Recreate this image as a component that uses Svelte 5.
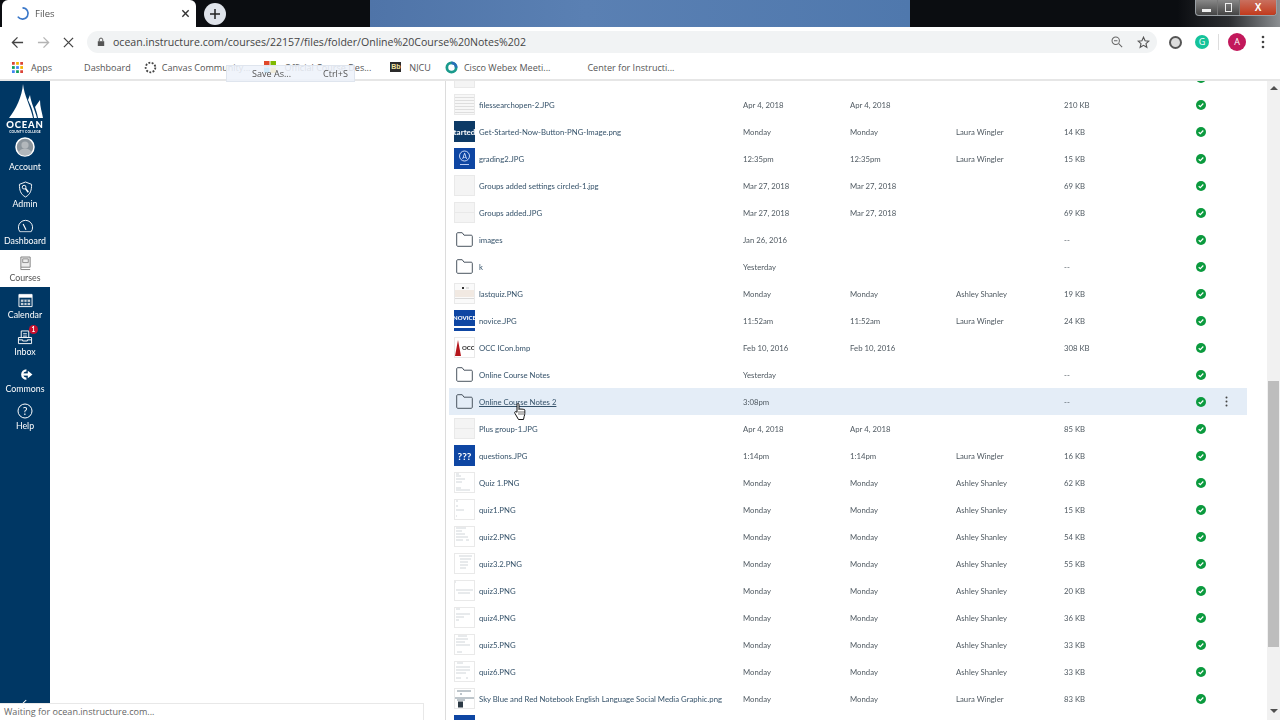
<script>
	const files = [
		{ kind: "plain", name: "", date: "", mod: "", by: "", size: "" },
		{ kind: "grid", name: "filessearchopen-2.JPG", date: "Apr 4, 2018", mod: "Apr 4, 2018", by: "", size: "210 KB" },
		{ kind: "started", name: "Get-Started-Now-Button-PNG-Image.png", date: "Monday", mod: "Monday", by: "Laura Wingler", size: "14 KB" },
		{ kind: "grading", name: "grading2.JPG", date: "12:35pm", mod: "12:35pm", by: "Laura Wingler", size: "15 KB" },
		{ kind: "plain", name: "Groups added settings circled-1.jpg", date: "Mar 27, 2018", mod: "Mar 27, 2018", by: "", size: "69 KB" },
		{ kind: "plain", name: "Groups added.JPG", date: "Mar 27, 2018", mod: "Mar 27, 2018", by: "", size: "69 KB" },
		{ kind: "folder", name: "images", date: "Jan 26, 2016", mod: "", by: "", size: "--" },
		{ kind: "folder", name: "k", date: "Yesterday", mod: "", by: "", size: "--" },
		{ kind: "lastquiz", name: "lastquiz.PNG", date: "Monday", mod: "Monday", by: "Ashley Shanley", size: "19 KB" },
		{ kind: "novice", name: "novice.JPG", date: "11:52am", mod: "11:52am", by: "Laura Wingler", size: "24 KB" },
		{ kind: "occ", name: "OCC ICon.bmp", date: "Feb 10, 2016", mod: "Feb 10, 2016", by: "", size: "308 KB" },
		{ kind: "folder", name: "Online Course Notes", date: "Yesterday", mod: "", by: "", size: "--" },
		{ kind: "folder", name: "Online Course Notes 2", date: "3:08pm", mod: "", by: "", size: "--", hover: true },
		{ kind: "plain", name: "Plus group-1.JPG", date: "Apr 4, 2018", mod: "Apr 4, 2018", by: "", size: "85 KB" },
		{ kind: "questions", name: "questions.JPG", date: "1:14pm", mod: "1:14pm", by: "Laura Wingler", size: "16 KB" },
		{ kind: "lines", lines: "M2 2h3M2 4h5M2 7h9M2 10h6M2 16h5M2 18h14", name: "Quiz 1.PNG", date: "Monday", mod: "Monday", by: "Ashley Shanley", size: "62 KB" },
		{ kind: "lines", lines: "M2 2h2M2 7h2M2 11h8M2 17h1", name: "quiz1.PNG", date: "Monday", mod: "Monday", by: "Ashley Shanley", size: "15 KB" },
		{ kind: "lines", lines: "M2 2h10M2 5h6M2 8h9M2 11h12M2 14h7M12 14h3", name: "quiz2.PNG", date: "Monday", mod: "Monday", by: "Ashley Shanley", size: "54 KB" },
		{ kind: "lines", lines: "M5 3h13M6 6h11M6 9h8M6 12h8M6 15h6", name: "quiz3.2.PNG", date: "Monday", mod: "Monday", by: "Ashley Shanley", size: "55 KB" },
		{ kind: "lines", lines: "M1 2h1M2 10h17M4 13h12", name: "quiz3.PNG", date: "Monday", mod: "Monday", by: "Ashley Shanley", size: "20 KB" },
		{ kind: "lines", lines: "M2 2h4M2 7h14M2 10h8M2 13h3", name: "quiz4.PNG", date: "Monday", mod: "Monday", by: "Ashley Shanley", size: "36 KB" },
		{ kind: "lines", lines: "M4 2h9M2 5h12M2 8h9M2 11h14M3 18h5", name: "quiz5.PNG", date: "Monday", mod: "Monday", by: "Ashley Shanley", size: "33 KB" },
		{ kind: "lines", lines: "M3 2h6M2 6h14M2 9h14M2 12h10M2 17h5M12 17h2", name: "quiz6.PNG", date: "Monday", mod: "Monday", by: "Ashley Shanley", size: "33 KB" },
		{ kind: "sky", name: "Sky Blue and Red Notebook English Language Social Media Graphic.png", date: "Monday", mod: "Monday", by: "Laura Wingler", size: "83 KB" },
		{ kind: "bluebox", name: "", date: "", mod: "", by: "", size: "" }
	];
</script>

<div class="browser">
	<header class="tabstrip">
		<div class="tab">
			<svg class="spinner" viewBox="0 0 16 16" width="15" height="15"><path d="M8 2a6 6 0 1 1-5 9.300" fill="none" stroke="#3b78c9" stroke-width="1.800"/></svg>
			<span class="tab_title">Files</span>
			<svg class="tab_close" viewBox="0 0 10 10" width="9" height="9"><path d="M1.500 1.500l7 7M8.500 1.500l-7 7" stroke="#333" stroke-width="1.500"/></svg>
		</div>
		<div class="newtab">
			<svg viewBox="0 0 12 12" width="12" height="12"><path d="M6 1v10M1 6h10" stroke="#222" stroke-width="1.500"/></svg>
		</div>
		<div class="wallpaper"></div>
		<div class="winbtns">
			<span class="winbtn"><i class="min"></i></span>
			<span class="winbtn"><i class="restore"></i></span>
			<span class="winbtn close">X</span>
		</div>
	</header>

	<div class="toolbar">
		<svg class="nav_btn" viewBox="0 0 14 14" width="13" height="13"><path d="M13 7H2M7 1.500L1.500 7 7 12.500" fill="none" stroke="#444" stroke-width="1.400"/></svg>
		<svg class="nav_btn fwd" viewBox="0 0 14 14" width="13" height="13"><path d="M1 7h11M7 1.500L12.500 7 7 12.500" fill="none" stroke="#b4b4b4" stroke-width="1.400"/></svg>
		<svg class="nav_btn stop" viewBox="0 0 12 12" width="11" height="11"><path d="M1 1l10 10M11 1L1 11" stroke="#444" stroke-width="1.400"/></svg>
		<div class="omnibox">
			<svg class="lock" viewBox="0 0 10 12" width="8" height="10"><path d="M1 5h8v6H1z" fill="#555"/><path d="M2.800 5V3.300a2.200 2.200 0 0 1 4.400 0V5" fill="none" stroke="#555" stroke-width="1.200"/></svg>
			<span class="url">ocean.instructure.com/courses/22157/files/folder/Online%20Course%20Notes%202</span>
			<svg class="zoom_out" viewBox="0 0 14 14" width="12" height="12"><circle cx="5.500" cy="5.500" r="4.300" fill="none" stroke="#666" stroke-width="1.200"/><path d="M9 9l4 4M3.500 5.500h4" stroke="#666" stroke-width="1.200"/></svg>
			<svg class="star" viewBox="0 0 14 14" width="13" height="13"><path d="M7 1.300l1.700 3.800 4 .4-3 2.700.9 4L7 10.100l-3.600 2.100.9-4-3-2.700 4-.4z" fill="none" stroke="#555" stroke-width="1.200"/></svg>
		</div>
		<span class="ext_grey"></span>
		<span class="ext_green">G</span>
		<span class="tb_divider"></span>
		<span class="avatar">A</span>
		<svg class="kebab_main" viewBox="0 0 4 14" width="4" height="14"><circle cx="2" cy="2" r="1.300" fill="#444"/><circle cx="2" cy="7" r="1.300" fill="#444"/><circle cx="2" cy="12" r="1.300" fill="#444"/></svg>
	</div>

	<div class="bookmarks">
		<span class="bm bm_apps">
			<svg viewBox="0 0 12 12" width="11" height="11">
				<rect width="3" height="3" fill="#db4437"/><rect x="4.500" width="3" height="3" fill="#f4b400"/><rect x="9" width="3" height="3" fill="#db4437"/>
				<rect y="4.500" width="3" height="3" fill="#0f9d58"/><rect x="4.500" y="4.500" width="3" height="3" fill="#4285f4"/><rect x="9" y="4.500" width="3" height="3" fill="#f4b400"/>
				<rect y="9" width="3" height="3" fill="#4285f4"/><rect x="4.500" y="9" width="3" height="3" fill="#0f9d58"/><rect x="9" y="9" width="3" height="3" fill="#db4437"/>
			</svg>
			Apps
		</span>
		<span class="bm bm_dash">Dashboard</span>
		<span class="bm bm_canvas">
			<svg viewBox="0 0 14 14" width="13" height="13"><circle cx="7" cy="7" r="5.200" fill="none" stroke="#444" stroke-width="2" stroke-dasharray="2 1.600"/></svg>
			Canvas Community...
		</span>
		<span class="bm bm_official">
			<svg viewBox="0 0 12 12" width="12" height="12"><rect width="5.500" height="5.500" fill="#e0492a"/><rect x="6.500" width="5.500" height="5.500" fill="#7fba00"/><rect y="6.500" width="5.500" height="5.500" fill="#00a4ef"/><rect x="6.500" y="6.500" width="5.500" height="5.500" fill="#ffb900"/></svg>
			Official Course Des...
		</span>
		<span class="bm bm_njcu"><span class="bb">Bb</span>NJCU</span>
		<span class="bm bm_webex">
			<svg viewBox="0 0 14 14" width="13" height="13"><circle cx="7" cy="7" r="5" fill="none" stroke="#1a9a8c" stroke-width="3"/><path d="M7 2a5 5 0 0 1 5 5" fill="none" stroke="#2a6fb8" stroke-width="3"/></svg>
			Cisco Webex Meeti...
		</span>
		<span class="bm bm_center">Center for Instructi...</span>
	</div>

	<main class="page">
		<nav class="sidenav">
			<div class="logo">
				<svg viewBox="0 0 50 40" width="50" height="40">
					<path d="M23 3C24 14 30 24 33 37H9C16 28 22 16 23 3z" fill="#fff"/>
					<path d="M30 14c1 8 5 15 7 23h-3c-1-8-4-14-6-18z" fill="#fff"/>
					<path d="M40 19c0 7 2 12 3 18h-5c-1-5-2-8-3-11z" fill="#fff"/>
				</svg>
				<span class="logo_name">OCEAN</span>
				<span class="logo_sub">COUNTY COLLEGE</span>
			</div>
			<div class="nav_item">
				<span class="nav_icon account">
					<svg viewBox="0 0 20 20" width="20" height="20"><circle cx="10" cy="10" r="9" fill="#8c959c" stroke="#fff" stroke-width="1.500"/><circle cx="10" cy="8" r="3.600" fill="#b3b8bc"/><path d="M3.500 16c1-3.500 4-4.500 6.500-4.500s5.500 1 6.500 4.500a9 9 0 0 1-13 0z" fill="#b3b8bc"/></svg>
				</span>
				<span class="nav_label">Account</span>
			</div>
			<div class="nav_item">
				<span class="nav_icon">
					<svg viewBox="0 0 16 18" width="15" height="17"><path d="M8 1l6.500 2.500c0 6-1 10.500-6.500 13.500C2.500 14 1.500 9.500 1.500 3.500z" fill="none" stroke="#fff" stroke-width="1"/><circle cx="6.500" cy="6.500" r="2" fill="none" stroke="#fff"/><path d="M8 8l3 4" stroke="#fff" stroke-width="1.600"/></svg>
				</span>
				<span class="nav_label">Admin</span>
			</div>
			<div class="nav_item">
				<span class="nav_icon">
					<svg viewBox="0 0 18 14" width="17" height="14"><path d="M3 13A7.500 7.500 0 1 1 15 13" fill="none" stroke="#fff" stroke-width="1"/><path d="M3 13h12" stroke="#fff" stroke-width=".8"/><path d="M6.500 5l3 6" stroke="#fff" stroke-width="1.200"/></svg>
				</span>
				<span class="nav_label">Dashboard</span>
			</div>
			<div class="nav_item active">
				<span class="nav_icon">
					<svg viewBox="0 0 14 16" width="13" height="15"><path d="M2 1h10v11H2z" fill="#ececec" stroke="#7e7e7e"/><path d="M4 3h6v4H4z" fill="none" stroke="#8a8a8a"/><path d="M2 12v2.500h10" fill="none" stroke="#7e7e7e"/></svg>
				</span>
				<span class="nav_label">Courses</span>
			</div>
			<div class="nav_item">
				<span class="nav_icon">
					<svg viewBox="0 0 16 16" width="15" height="15"><path d="M1 1.500h14v13H1z" fill="none" stroke="#fff"/><path d="M1 2h14v3H1z" fill="#fff"/><path d="M3 7h10v6H3z" fill="#c5ced6"/><path d="M6.300 7v6M9.700 7v6M3 10h10" stroke="#003764"/></svg>
				</span>
				<span class="nav_label">Calendar</span>
			</div>
			<div class="nav_item">
				<span class="nav_icon">
					<svg viewBox="0 0 16 16" width="16" height="15"><path d="M4 1h8v9H4z" fill="none" stroke="#fff"/><path d="M6 4h4M6 6.500h4" stroke="#fff"/><path d="M1 8h14v6.500H1z" fill="#003764" stroke="#fff"/><path d="M1 10.500h4.500v1.200h5v-1.200H15" fill="none" stroke="#fff"/></svg>
					<span class="badge">1</span>
				</span>
				<span class="nav_label">Inbox</span>
			</div>
			<div class="nav_item">
				<span class="nav_icon">
					<svg viewBox="0 0 16 14" width="15" height="13"><path d="M9 2.500a4.500 4.500 0 1 0 0 9" fill="none" stroke="#fff" stroke-width="2.400"/><path d="M5 7h7" stroke="#fff" stroke-width="2.400"/><path d="M10.500 3l5 4-5 4z" fill="#fff"/></svg>
				</span>
				<span class="nav_label">Commons</span>
			</div>
			<div class="nav_item">
				<span class="nav_icon">
					<svg viewBox="0 0 16 16" width="16" height="16"><circle cx="8" cy="8" r="7" fill="none" stroke="#fff"/><text x="8" y="11.800" text-anchor="middle" font-size="10.500" font-family="Lato, sans-serif" fill="#fff">?</text></svg>
				</span>
				<span class="nav_label">Help</span>
			</div>
			<svg class="collapse" viewBox="0 0 8 10" width="7" height="9"><path d="M6 1L2 5l4 4" fill="none" stroke="#fff" stroke-width="1.200"/></svg>
		</nav>

		<aside class="folder_pane"></aside>

		<section class="listing">
			{#each files as file}
				<div class="row" class:hover={file.hover}>
					{#if file.kind === "folder"}
						<svg class="folder_icon" viewBox="0 0 17 15" width="17" height="15"><path d="M.700 13.300V1.700c0-.5.400-1 1-1h4.500l1.800 2.500h7.300c.5 0 1 .4 1 1v9.100c0 .5-.5 1-1 1H1.700c-.6 0-1-.5-1-1z" fill="none" stroke="#4a5560" stroke-width="1"/></svg>
					{:else if file.kind === "started"}
						<span class="thumb navy">tarted</span>
					{:else if file.kind === "grading"}
						<span class="thumb blue">
							<svg viewBox="0 0 21 21" width="21" height="21"><circle cx="10.500" cy="8" r="5" fill="none" stroke="#dfe8ff" stroke-width=".9"/><text x="10.500" y="10.500" text-anchor="middle" font-size="7" font-family="Lato, sans-serif" fill="#dfe8ff">A</text><path d="M6 16.500h9" stroke="#cfdcff" stroke-width=".9"/></svg>
						</span>
					{:else if file.kind === "novice"}
						<span class="thumb novice">NOVICE</span>
					{:else if file.kind === "occ"}
						<span class="thumb occ">
							<svg viewBox="0 0 6 16" width="6" height="16"><path d="M3 0l3 16H0z" fill="#b5161c"/></svg>
							<b>OCC</b>
						</span>
					{:else if file.kind === "questions"}
						<span class="thumb blue qq">???</span>
					{:else if file.kind === "bluebox"}
						<span class="thumb blue"></span>
					{:else if file.kind === "lastquiz"}
						<span class="thumb pale">
							<svg viewBox="0 0 21 21" width="21" height="21"><rect x="8" y="4" width="2" height="2" fill="#333"/><path d="M12 5h3" stroke="#aaa" stroke-width=".6"/><path d="M0 10.500h21" stroke="#f1e9e2" stroke-width="7"/><path d="M0 15.500h21" stroke="#ccc" stroke-width=".7"/></svg>
						</span>
					{:else if file.kind === "grid"}
						<span class="thumb grid"></span>
					{:else if file.kind === "lines"}
						<span class="thumb">
							<svg viewBox="0 0 21 21" width="21" height="21"><path d={file.lines} stroke="#c4cacf" stroke-width=".8"/></svg>
						</span>
					{:else if file.kind === "sky"}
						<span class="thumb">
							<svg viewBox="0 0 21 21" width="21" height="21"><path d="M3 3h14M6 6h2M1 10h19M3 12h8" stroke="#7d8c97" stroke-width="1"/><rect x="4" y="13.500" width="5" height="6" fill="#2c3a46"/></svg>
						</span>
					{:else}
						<span class="thumb plain"></span>
					{/if}
					<span class="name">{file.name}</span>
					<span>{file.date}</span>
					<span>{file.mod}</span>
					<span>{file.by}</span>
					<span>{file.size}</span>
					{#if file.kind !== "bluebox"}
						<svg class="status" viewBox="0 0 10 10" width="10" height="10"><circle cx="5" cy="5" r="5" fill="#0b9a3e"/><path d="M2.700 5.200l1.600 1.500 3-3.200" fill="none" stroke="#fff" stroke-width="1.200"/></svg>
					{/if}
					{#if file.hover}
						<svg class="kebab" viewBox="0 0 3 11" width="3" height="11"><circle cx="1.500" cy="1.500" r="1" fill="#444"/><circle cx="1.500" cy="5.500" r="1" fill="#444"/><circle cx="1.500" cy="9.500" r="1" fill="#444"/></svg>
					{/if}
				</div>
			{/each}
		</section>

		<div class="scrollbar">
			<span class="arrow up"></span>
			<span class="thumb_bar"></span>
			<span class="arrow down"></span>
		</div>

		<div class="status_bar">Waiting for ocean.instructure.com...</div>
	</main>

	<div class="saveas"><span>Save As...</span><span>Ctrl+S</span></div>

	<svg class="cursor" viewBox="0 0 14 18" width="14" height="18">
		<path d="M4 1.500c0-1.200 2-1.200 2 0v5c.2-1 1.800-1 2 0 .2-.9 1.800-.9 2 .2.3-.8 1.800-.6 1.800.6 0 2.500.2 4-.6 6l-.7 3.200H5.500L2 10.500C1 9 2.500 7.800 4 9.300z" fill="#fff" stroke="#111" stroke-width="1"/>
		<path d="M6 8v4M8 8v4M10 8v4" stroke="#111" stroke-width=".6"/>
	</svg>
</div>

<style>
	:global(body) {
		margin: 0;
		background: #fff;
		overflow: hidden;
	}

	.browser {
		position: relative;
		width: 1280px;
		height: 720px;
		overflow: hidden;
		display: flex;
		flex-direction: column;
		font-family: "Open Sans", "Liberation Sans", sans-serif;
		color: #444;
		filter: blur(0.4px);
	}

	.tabstrip {
		height: 27px;
		flex: none;
		display: flex;
		align-items: center;
		background: linear-gradient(90deg, #0b0d11 92%, #2b2d30 96%, #8c8f92);
		position: relative;
	}

	.tab {
		width: 194px;
		height: 27px;
		margin-left: 2px;
		flex: none;
		box-sizing: border-box;
		background: #fff;
		border-radius: 6px 6px 0 0;
		display: flex;
		align-items: center;
		padding-left: 13px;
		z-index: 1;
	}

	.tab_title {
		margin-left: 5px;
		font-size: 9.500px;
		color: #555;
	}

	.tab_close {
		margin-left: auto;
		margin-right: 6px;
	}

	.newtab {
		width: 22px;
		height: 22px;
		margin-left: 8px;
		flex: none;
		border-radius: 50%;
		background: #dfe3ea;
		display: flex;
		align-items: center;
		justify-content: center;
		z-index: 1;
	}

	.wallpaper {
		position: absolute;
		left: 370px;
		width: 540px;
		top: 0;
		bottom: 0;
		background: linear-gradient(90deg, #4f74a8, #5a80b3 40%, #4f78ad);
	}

	.winbtns {
		position: absolute;
		right: 3px;
		top: 0;
		height: 15px;
		display: flex;
		border: 1px solid #9aa0a5;
		border-top: none;
		border-radius: 0 0 4px 4px;
		overflow: hidden;
		background: linear-gradient(#888, #444);
	}

	.winbtn {
		width: 21px;
		display: flex;
		align-items: center;
		justify-content: center;
		border-right: 1px solid #777;
	}

	.winbtn.close {
		width: 36px;
		border: none;
		background: linear-gradient(#c9705f, #c23a1c);
		color: #fff;
		font: bold 10px "Liberation Sans", sans-serif;
	}

	.min {
		width: 9px;
		height: 3px;
		margin-top: 5px;
		background: #eee;
	}

	.restore {
		width: 5px;
		height: 7px;
		border: 1.500px solid #eee;
	}

	.toolbar {
		height: 28px;
		flex: none;
		box-sizing: border-box;
		padding-top: 2px;
		display: flex;
		align-items: center;
		background: #fff;
	}

	.nav_btn {
		margin-left: 11px;
		flex: none;
	}

	.nav_btn.fwd {
		margin-left: 13px;
	}

	.nav_btn.stop {
		margin-left: 13px;
	}

	.omnibox {
		width: 1070px;
		height: 22px;
		margin-left: 13px;
		flex: none;
		box-sizing: border-box;
		padding-left: 10px;
		border-radius: 11px;
		background: #f1f3f4;
		display: flex;
		align-items: center;
	}

	.url {
		margin-left: 8px;
		font-size: 10.580px;
		color: #444;
		white-space: nowrap;
	}

	.zoom_out {
		margin-left: auto;
	}

	.star {
		margin-left: 14px;
		margin-right: 7px;
	}

	.ext_grey {
		width: 9px;
		height: 9px;
		margin-left: 12px;
		flex: none;
		border-radius: 50%;
		border: 2px solid #555;
		background: #ddd;
	}

	.ext_green {
		width: 14px;
		height: 14px;
		margin-left: 13px;
		flex: none;
		border-radius: 50%;
		background: #15c39a;
		color: #fff;
		font-size: 9px;
		line-height: 14px;
		text-align: center;
	}

	.tb_divider {
		width: 1px;
		height: 16px;
		margin-left: 9px;
		background: #ddd;
	}

	.avatar {
		width: 18px;
		height: 18px;
		margin-left: 9px;
		flex: none;
		border-radius: 50%;
		background: #c2185b;
		color: #fff;
		font-size: 9px;
		line-height: 18px;
		text-align: center;
	}

	.kebab_main {
		margin-left: 15px;
	}

	.bookmarks {
		height: 24px;
		flex: none;
		display: flex;
		align-items: center;
		border-bottom: 2px solid #e6e6e6;
		background: #fff;
		font-size: 9.050px;
		color: #555;
	}

	.bm {
		display: flex;
		align-items: center;
		gap: 6px;
		white-space: nowrap;
	}

	.bm_apps {
		margin-left: 12px;
		gap: 8px;
	}

	.bm_dash {
		margin-left: 32px;
	}

	.bm_canvas {
		margin-left: 13px;
		gap: 5px;
	}

	.bm_official {
		margin-left: 14px;
		gap: 8px;
	}

	.bm_njcu {
		margin-left: 19px;
	}

	.bm_webex {
		margin-left: 14px;
	}

	.bm_center {
		margin-left: 37px;
	}

	.bb {
		width: 11px;
		height: 10px;
		margin-right: 2px;
		background: #2b2b2b;
		color: #f2e3a0;
		font: bold 7px "Liberation Sans", sans-serif;
		line-height: 10px;
		text-align: center;
	}

	.page {
		position: relative;
		flex: 1;
		min-height: 0;
		display: flex;
		overflow: hidden;
	}

	.sidenav {
		width: 50px;
		flex: none;
		display: flex;
		flex-direction: column;
		background: #003764;
		color: #fff;
		font: 8.800px Lato, sans-serif;
	}

	.logo {
		height: 58px;
		flex: none;
		display: flex;
		flex-direction: column;
		align-items: center;
	}

	.logo_name {
		margin-top: -1px;
		font: 900 9.500px/9px Lato, sans-serif;
		letter-spacing: 0.800px;
	}

	.logo_sub {
		margin-top: 1px;
		font: 700 3.300px/4px Lato, sans-serif;
		letter-spacing: 0.200px;
		white-space: nowrap;
	}

	.nav_item {
		height: 37px;
		flex: none;
		box-sizing: border-box;
		padding-top: 4px;
		display: flex;
		flex-direction: column;
		align-items: center;
		line-height: 10px;
	}

	.nav_label {
		margin-top: 1px;
	}

	.nav_item.active {
		background: #fff;
		color: #555;
	}

	.nav_icon {
		position: relative;
		height: 18px;
		display: flex;
		align-items: center;
		justify-content: center;
	}

	.nav_icon.account {
		margin-top: -5px;
		margin-bottom: 5px;
	}

	.badge {
		position: absolute;
		top: -3px;
		right: -5px;
		width: 9px;
		height: 9px;
		border-radius: 50%;
		background: #c8102e;
		color: #fff;
		font: 700 6.500px/9px Lato, sans-serif;
		text-align: center;
	}

	.collapse {
		margin-top: auto;
		margin-bottom: 12px;
		margin-left: 21px;
	}

	.folder_pane {
		width: 395px;
		flex: none;
		border-right: 1px solid #dcdcdc;
	}

	.listing {
		flex: 1;
		min-width: 0;
		margin-top: -17px;
		padding: 0 20px 0 3px;
		font: 7.750px Lato, sans-serif;
		color: #505a62;
	}

	.row {
		height: 27px;
		display: grid;
		grid-template-columns: 25px 264px 107px 106px 108px 132px 10px 1fr;
		align-items: center;
		padding-left: 5px;
		white-space: nowrap;
	}

	.row.hover {
		background: #e4edf7;
	}

	.name {
		color: #35526a;
	}

	.row.hover .name {
		text-decoration: underline;
	}

	.thumb {
		width: 21px;
		height: 21px;
		box-sizing: border-box;
		display: flex;
		align-items: center;
		overflow: hidden;
		border: 1px solid #e9e9e9;
		background: #fff;
	}

	.thumb svg {
		flex: none;
		margin: -1px;
	}

	.plain {
		background: linear-gradient(#f4f4f4 45%, #e9e9e9 45%, #e9e9e9 50%, #f4f4f4 50%);
	}

	.grid {
		background: repeating-linear-gradient(#f7f7f7 0 2px, #dedede 2px 3px);
	}

	.pale {
		background: #fafafa;
	}

	.navy {
		border: none;
		justify-content: center;
		background: #0d3a66;
		color: #fff;
		font: 700 8px Lato, sans-serif;
	}

	.blue {
		border: none;
		background: #0e46a3;
	}

	.blue svg {
		margin: 0;
	}

	.novice {
		flex-direction: column;
		justify-content: flex-start;
		padding-top: 4px;
		border: none;
		background: linear-gradient(#0e46a3 78%, #fff 78%, #fff 84%, #0e46a3 84%);
		color: #fff;
		font: 900 6px Lato, sans-serif;
	}

	.occ {
		gap: 1px;
		font: 700 6px Lato, sans-serif;
		color: #333;
	}

	.occ svg {
		margin: 0;
	}

	.qq {
		justify-content: center;
		color: #fff;
		font: 700 10px Lato, sans-serif;
	}

	.folder_icon {
		margin-left: 2px;
	}

	.kebab {
		margin-left: 19px;
	}

	.scrollbar {
		width: 13px;
		flex: none;
		display: flex;
		flex-direction: column;
		align-items: center;
		background: #f1f1f1;
	}

	.arrow {
		width: 0;
		height: 0;
		border-left: 4px solid transparent;
		border-right: 4px solid transparent;
	}

	.arrow.up {
		margin-top: 5px;
		border-bottom: 4px solid #505050;
	}

	.arrow.down {
		margin-top: 62px;
		border-top: 4px solid #505050;
	}

	.thumb_bar {
		width: 11px;
		height: 266px;
		margin-top: 291px;
		background: #bdbdbd;
	}

	.status_bar {
		position: absolute;
		left: 0;
		bottom: 0;
		width: 424px;
		height: 17px;
		box-sizing: border-box;
		padding-left: 4px;
		border-top: 1px solid #e8e8e8;
		border-right: 1px solid #e8e8e8;
		background: #fff;
		font-size: 9.050px;
		line-height: 16px;
		color: #666;
	}

	.saveas {
		position: absolute;
		left: 226px;
		top: 65px;
		width: 129px;
		height: 17px;
		box-sizing: border-box;
		padding: 0 6px 0 25px;
		display: flex;
		justify-content: space-between;
		align-items: center;
		background: rgba(238, 243, 250, 0.88);
		border: 1px solid #dfe5ee;
		font-size: 9.050px;
		color: #555;
	}

	.cursor {
		position: absolute;
		left: 513px;
		top: 403px;
	}
</style>
